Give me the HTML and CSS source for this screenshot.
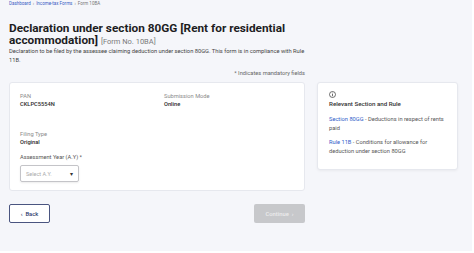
FILE: index.html
```html
<!DOCTYPE html>
<html lang="en">
<head>
  <meta charset="UTF-8">
  <meta name="viewport" content="width=device-width, initial-scale=1.0">
  <title>Form 10BA</title>
  <link rel="stylesheet" href="styles.css">
</head>
<body>
  <div class="page">
    <nav class="crumbs">
      <a href="#">Dashboard</a><span class="sep">›</span><a href="#">Income-tax Forms</a><span class="sep">›</span><span class="current">Form 10BA</span>
    </nav>

    <h1 class="title">Declaration under section 80GG [Rent for residential accommodation] <span class="form-no">[Form No. 10BA]</span></h1>
    <p class="desc">Declaration to be filed by the assessee claiming deduction under section 80GG. This form is in compliance with Rule 11B.</p>

    <div class="layout">
      <div class="mandatory">* Indicates mandatory fields</div>

      <div class="card">
        <div class="fields">
          <div class="field">
            <div class="label">PAN</div>
            <div class="value">CKLPC5554N</div>
          </div>
          <div class="field">
            <div class="label">Submission Mode</div>
            <div class="value">Online</div>
          </div>
          <div class="field">
            <div class="label">Filing Type</div>
            <div class="value">Original</div>
          </div>
        </div>
        <div class="label ay-label">Assessment Year (A.Y) *</div>
        <div class="select">
          <span>Select A.Y.</span>
          <span class="caret">▾</span>
        </div>
      </div>

      <aside class="info">
        <svg class="info-icon" width="7" height="7" viewBox="0 0 14 14">
          <circle cx="7" cy="7" r="6" fill="none" stroke="#333" stroke-width="1.4"/>
          <rect x="6.3" y="6" width="1.4" height="4.5" fill="#333"/>
          <circle cx="7" cy="4.1" r="0.9" fill="#333"/>
        </svg>
        <div class="info-title">Relevant Section and Rule</div>
        <p class="rule"><a href="#">Section 80GG</a> - Deductions in respect of rents paid</p>
        <p class="rule"><a href="#">Rule 11B</a> - Conditions for allowance for deduction under section 80GG</p>
      </aside>

      <div class="actions">
        <button class="btn-back">‹&nbsp; Back</button>
        <button class="btn-continue" disabled>Continue &nbsp;›</button>
      </div>
    </div>
  </div>
</body>
</html>
```

FILE: styles.css
```css
body {
  margin: 0;
  background: #fff;
  font-family: Roboto, "Liberation Sans", sans-serif;
  color: #222;
}
.page {
  width: 472px;
  height: 251px;
  box-sizing: border-box;
  padding: 0 9px;
  background: #f5f6fa;
  overflow: hidden;
}
.crumbs {
  font-size: 4.5px;
  line-height: 8px;
  color: #777;
}
.crumbs a {
  color: #3a5cc4;
  text-decoration: none;
}
.crumbs .sep {
  margin: 0 2px;
  color: #888;
}
.title {
  width: 296px;
  margin: 14px 0 0;
  font-size: 11.8px;
  line-height: 12px;
  font-weight: 700;
  color: #1d1d1f;
}
.form-no {
  font-size: 7.5px;
  font-weight: 400;
  color: #7a7a7a;
}
.desc {
  width: 298px;
  margin: -1px 0 0;
  font-size: 5.75px;
  line-height: 8.5px;
  color: #444;
}
.layout {
  display: grid;
  grid-template-columns: 296px 141px;
  column-gap: 12px;
  align-items: start;
}
.mandatory {
  grid-column: 1;
  margin-top: 5px;
  text-align: right;
  font-size: 5.7px;
  line-height: 8px;
  color: #666;
}
.card {
  grid-column: 1;
  grid-row: 2;
  margin-top: 5px;
  height: 109px;
  box-sizing: border-box;
  padding: 9px 10px 0;
  background: #fff;
  border: 1px solid #e6e8ee;
  border-radius: 3px;
}
.fields {
  display: grid;
  grid-template-columns: 144px 1fr;
  row-gap: 21px;
}
.label {
  font-size: 5.7px;
  line-height: 8px;
  color: #8a8a8a;
}
.value {
  font-size: 5.7px;
  line-height: 9px;
  font-weight: 500;
  color: #2a2a2a;
}
.ay-label {
  margin-top: 6px;
  color: #555;
}
.select {
  display: flex;
  align-items: center;
  justify-content: space-between;
  width: 59px;
  height: 17px;
  margin-top: 4px;
  box-sizing: border-box;
  padding: 0 5px;
  border: 1px solid #c4c4c8;
  border-radius: 2px;
  box-shadow: 0 1px 2px rgba(0, 0, 0, 0.08);
  font-size: 5.5px;
  color: #aaa;
}
.select .caret {
  font-size: 6px;
  color: #333;
}
.info {
  grid-column: 2;
  grid-row: 2;
  margin-top: 5px;
  height: 88px;
  box-sizing: border-box;
  padding: 8px 8px 0 11px;
  background: #fff;
  border: 1px solid #e6e8ee;
  border-radius: 3px;
  box-shadow: 0 1px 3px rgba(0, 0, 0, 0.05);
}
.info-icon {
  display: block;
}
.info-title {
  margin-top: 2px;
  font-size: 6.2px;
  line-height: 9px;
  font-weight: 500;
  color: #333;
}
.rule {
  margin: 6px 0 0;
  font-size: 5.7px;
  line-height: 9px;
  color: #555;
}
.rule + .rule {
  margin-top: 5px;
}
.rule a {
  color: #2f5cc9;
  text-decoration: none;
}
.actions {
  grid-column: 1;
  grid-row: 3;
  display: flex;
  justify-content: space-between;
  margin-top: 13px;
}
.actions button {
  height: 19px;
  padding: 0;
  border-radius: 2px;
  font-family: Roboto, "Liberation Sans", sans-serif;
  font-size: 5.8px;
  font-weight: 500;
}
.btn-back {
  width: 41px;
  background: #fff;
  border: 1px solid #4a5580;
  color: #2d3a6b;
}
.btn-continue {
  width: 51px;
  background: #c7c8cb;
  border: none;
  color: #ececed;
}
```
